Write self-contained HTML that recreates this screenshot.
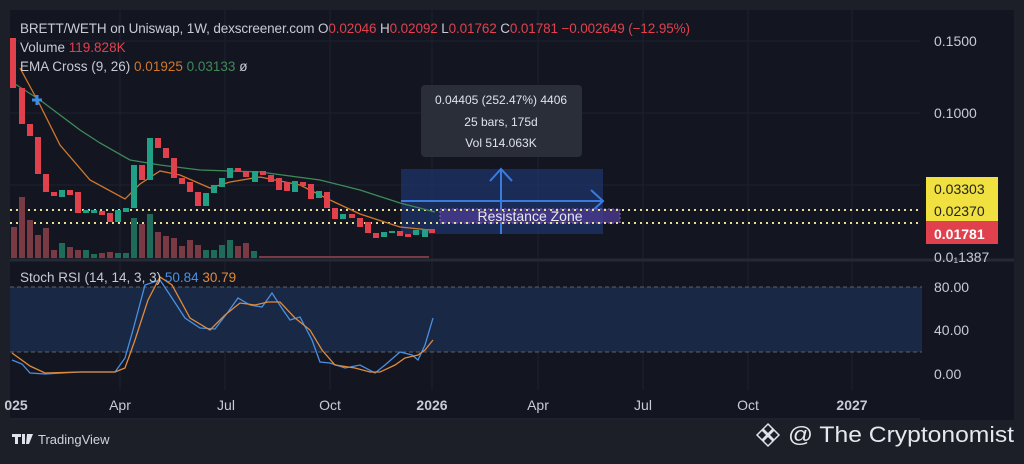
<!DOCTYPE html><html><head><style>
body{margin:0;width:1024px;height:459px;background:#1b1e27;overflow:hidden;font-family:"Liberation Sans",sans-serif}
</style></head><body>
<svg width="1024" height="459" viewBox="0 0 1024 459" xmlns="http://www.w3.org/2000/svg" font-family="Liberation Sans, sans-serif">
<rect x="0" y="0" width="1024" height="459" fill="#1c1f28"/>
<rect x="10" y="10" width="1004" height="410" fill="#131621"/>
<g stroke="#1c2030" stroke-width="1">
<line x1="120" y1="10" x2="120" y2="390"/><line x1="225" y1="10" x2="225" y2="390"/><line x1="330" y1="10" x2="330" y2="390"/><line x1="432" y1="10" x2="432" y2="390"/><line x1="538" y1="10" x2="538" y2="390"/><line x1="643" y1="10" x2="643" y2="390"/><line x1="748" y1="10" x2="748" y2="390"/><line x1="852" y1="10" x2="852" y2="390"/>
<line x1="10" y1="41" x2="920" y2="41"/><line x1="10" y1="113" x2="920" y2="113"/><line x1="10" y1="185" x2="920" y2="185"/>
</g>
<line x1="10" y1="260" x2="1014" y2="260" stroke="#252936" stroke-width="3"/>
<rect x="10" y="287" width="912" height="65" fill="#1b2a48" opacity="0.9"/>
<line x1="10" y1="287" x2="922" y2="287" stroke="#5a6070" stroke-dasharray="4,3"/>
<line x1="10" y1="352" x2="922" y2="352" stroke="#5a6070" stroke-dasharray="4,3"/>
<rect x="401" y="169" width="202" height="65" fill="#1f3a7a" opacity="0.6"/>
<line x1="401" y1="201" x2="603" y2="201" stroke="#3a7be0" stroke-width="2"/>
<line x1="501" y1="169" x2="501" y2="234" stroke="#3a7be0" stroke-width="2"/>
<path d="M490 181 L501 169 L512 181 M591 190 L603 201 L591 212" stroke="#3a7be0" stroke-width="2" fill="none"/>
<rect x="440" y="209" width="180" height="14" fill="#4a3a90" opacity="0.8" stroke="#a070e0" stroke-dasharray="2,2"/>
<text x="530" y="221" fill="#e8e8f0" font-size="14" text-anchor="middle">Resistance Zone</text>
<line x1="10" y1="210" x2="922" y2="210" stroke="#e8e090" stroke-width="2" stroke-dasharray="2,4"/>
<line x1="10" y1="223" x2="922" y2="223" stroke="#e8e090" stroke-width="2" stroke-dasharray="2,4"/>
<g fill="#7a3a44">
<rect x="11" y="227" width="6" height="31"/><rect x="19" y="197" width="6" height="61"/><rect x="27" y="220" width="6" height="38"/><rect x="35" y="235" width="6" height="23"/><rect x="43" y="228" width="6" height="30"/><rect x="51" y="250" width="6" height="8"/><rect x="67" y="247" width="6" height="11"/><rect x="75" y="250" width="6" height="8"/><rect x="99" y="253" width="6" height="5"/><rect x="107" y="252" width="6" height="6"/><rect x="139" y="224" width="6" height="34"/><rect x="155" y="232" width="6" height="26"/><rect x="163" y="236" width="6" height="22"/><rect x="171" y="238" width="6" height="20"/><rect x="179" y="246" width="6" height="12"/><rect x="187" y="240" width="6" height="18"/><rect x="195" y="245" width="6" height="13"/><rect x="235" y="246" width="6" height="12"/><rect x="243" y="243" width="6" height="15"/><rect x="259" y="256" width="170" height="2"/>
</g>
<g fill="#1f6b5a">
<rect x="59" y="243" width="6" height="15"/><rect x="83" y="250" width="6" height="8"/><rect x="91" y="254" width="6" height="4"/><rect x="115" y="253" width="6" height="5"/><rect x="123" y="253" width="6" height="5"/><rect x="131" y="218" width="6" height="40"/><rect x="147" y="214" width="6" height="44"/><rect x="203" y="250" width="6" height="8"/><rect x="211" y="250" width="6" height="8"/><rect x="219" y="245" width="6" height="13"/><rect x="227" y="240" width="6" height="18"/><rect x="251" y="251" width="6" height="7"/>
</g>
<polyline fill="none" stroke="#3f8a5a" stroke-width="1.3" points="15,84 40,100 60,115 80,130 100,143 130,160 160,165 200,170 260,172 320,180 360,190 400,203 435,212"/>
<polyline fill="none" stroke="#d0782c" stroke-width="1.3" points="20,68 40,105 60,145 90,180 125,199 140,184 160,171 180,175 210,188 230,182 260,177 300,185 330,200 360,214 400,227 430,230"/>
<g fill="#e0414d">
<rect x="10" y="38" width="6" height="50"/><rect x="19" y="88" width="6" height="36"/><rect x="27" y="124" width="6" height="12"/><rect x="35" y="137" width="6" height="37"/><rect x="43" y="174" width="6" height="18"/><rect x="51" y="192" width="6" height="4"/><rect x="67" y="190" width="6" height="5"/><rect x="75" y="192" width="6" height="21"/><rect x="99" y="211" width="6" height="4"/><rect x="107" y="213" width="6" height="9"/><rect x="139" y="165" width="6" height="15"/><rect x="155" y="138" width="6" height="10"/><rect x="163" y="148" width="6" height="10"/><rect x="171" y="158" width="6" height="20"/><rect x="179" y="178" width="6" height="6"/><rect x="187" y="182" width="6" height="10"/><rect x="195" y="192" width="6" height="14"/><rect x="235" y="168" width="6" height="4"/><rect x="243" y="171" width="6" height="6"/><rect x="260" y="171" width="6" height="4"/><rect x="268" y="175" width="6" height="7"/><rect x="276" y="178" width="6" height="12"/><rect x="284" y="182" width="6" height="9"/><rect x="300" y="182" width="6" height="4"/><rect x="308" y="184" width="6" height="15"/><rect x="324" y="192" width="6" height="16"/><rect x="332" y="208" width="6" height="11"/><rect x="349" y="214" width="6" height="4"/><rect x="357" y="218" width="6" height="9"/><rect x="365" y="222" width="6" height="11"/><rect x="373" y="233" width="6" height="5"/><rect x="397" y="231" width="6" height="5"/><rect x="405" y="234" width="6" height="3"/><rect x="429" y="229" width="6" height="4"/>
</g>
<g fill="#22a085">
<rect x="59" y="190" width="6" height="7"/><rect x="83" y="210" width="6" height="3"/><rect x="91" y="210" width="6" height="3"/><rect x="115" y="210" width="6" height="12"/><rect x="123" y="208" width="6" height="4"/><rect x="131" y="165" width="6" height="43"/><rect x="147" y="138" width="6" height="42"/><rect x="203" y="193" width="6" height="13"/><rect x="211" y="185" width="6" height="8"/><rect x="219" y="178" width="6" height="9"/><rect x="227" y="168" width="6" height="10"/><rect x="252" y="171" width="6" height="11"/><rect x="292" y="181" width="6" height="11"/><rect x="316" y="191" width="6" height="7"/><rect x="340" y="214" width="6" height="5"/><rect x="381" y="232" width="6" height="5"/><rect x="389" y="231" width="6" height="2"/><rect x="413" y="230" width="6" height="5"/><rect x="422" y="229" width="6" height="8"/>
</g>
<path d="M32 100h10M37 95v10" stroke="#3a8ee6" stroke-width="3"/>
<polyline fill="none" stroke="#4a90e2" stroke-width="1.3" points="12,360 22,364 30,373 45,374 80,372 115,372 125,358 133,330 145,285 160,280 170,295 185,318 200,328 215,329 228,312 238,298 250,305 262,307 272,293 283,310 290,320 300,317 312,340 320,362 330,363 345,368 360,365 375,373 385,365 400,352 412,355 418,360 425,345 433,318"/>
<polyline fill="none" stroke="#e08a3c" stroke-width="1.3" points="12,353 30,366 45,373 80,372 115,372 125,368 135,340 148,300 160,277 172,285 190,318 210,330 225,315 240,303 255,305 268,302 280,302 295,318 310,330 322,350 335,365 355,368 370,372 380,372 395,365 405,358 418,355 425,350 433,340"/>
<rect x="421" y="85" width="161" height="72" rx="4" fill="#2a2e39"/>
<g fill="#e0e3eb" font-size="12" text-anchor="middle">
<text x="501" y="104">0.04405 (252.47%) 4406</text><text x="501" y="126">25 bars, 175d</text><text x="501" y="147">Vol 514.063K</text></g>
<g font-size="13.5">
<text x="20" y="33" fill="#c8cbd4" textLength="670" lengthAdjust="spacing">BRETT/WETH on Uniswap, 1W, dexscreener.com  O<tspan fill="#e0414d">0.02046</tspan>  H<tspan fill="#e0414d">0.02092</tspan>  L<tspan fill="#e0414d">0.01762</tspan>  C<tspan fill="#e0414d">0.01781  −0.002649 (−12.95%)</tspan></text>
<text x="20" y="52" fill="#c8cbd4">Volume  <tspan fill="#e0414d">119.828K</tspan></text>
<text x="20" y="71" fill="#c8cbd4">EMA Cross (9, 26)  <tspan fill="#d0782c">0.01925</tspan>  <tspan fill="#3f8a5a">0.03133</tspan>  ø</text>
<text x="20" y="282" fill="#c8cbd4">Stoch RSI (14, 14, 3, 3) <tspan fill="#4a90e2">50.84</tspan>  <tspan fill="#e08a3c">30.79</tspan></text>
</g>
<g font-size="14" fill="#c8cbd4">
<text x="934" y="46">0.1500</text><text x="934" y="118">0.1000</text><text x="934" y="262">0.0₁1387</text>
<text x="934" y="292">80.00</text><text x="934" y="335">40.00</text><text x="934" y="379">0.00</text>
</g>
<rect x="926" y="177" width="72" height="44" fill="#f0e040"/>
<rect x="926" y="221" width="72" height="23" fill="#e0414d"/>
<g font-size="14"><text x="934" y="194" fill="#222">0.03303</text><text x="934" y="216" fill="#222">0.02370</text><text x="934" y="239" fill="#fff" font-weight="bold">0.01781</text></g>
<line x1="10" y1="419" x2="920" y2="419" stroke="#2a2e39"/>
<g font-size="14" fill="#c8cbd4" font-weight="bold" text-anchor="middle">
<text x="16" y="410">025</text><text x="120" y="410" font-weight="normal">Apr</text><text x="226" y="410" font-weight="normal">Jul</text><text x="330" y="410" font-weight="normal">Oct</text><text x="432" y="410">2026</text><text x="538" y="410" font-weight="normal">Apr</text><text x="643" y="410" font-weight="normal">Jul</text><text x="748" y="410" font-weight="normal">Oct</text><text x="852" y="410">2027</text>
</g>
<path d="M12 434h9v3h-3v7h-3v-7h-3z M22 434h3v10h-3z M27 434h6l-4 10h-3z" fill="#e0e3eb"/>
<text x="38" y="444" font-size="13" fill="#d0d3db">TradingView</text>
<path d="M768 424l5 5-5 5-5-5zM768 436l5 5-5 5-5-5zM762 430l5 5-5 5-5-5zM774 430l5 5-5 5-5-5z" fill="none" stroke="#e0e3eb" stroke-width="1.5"/>
<text x="788" y="442" font-size="22" fill="#e6e8ee" textLength="226" lengthAdjust="spacingAndGlyphs">@ The Cryptonomist</text>
</svg>
</body></html>
